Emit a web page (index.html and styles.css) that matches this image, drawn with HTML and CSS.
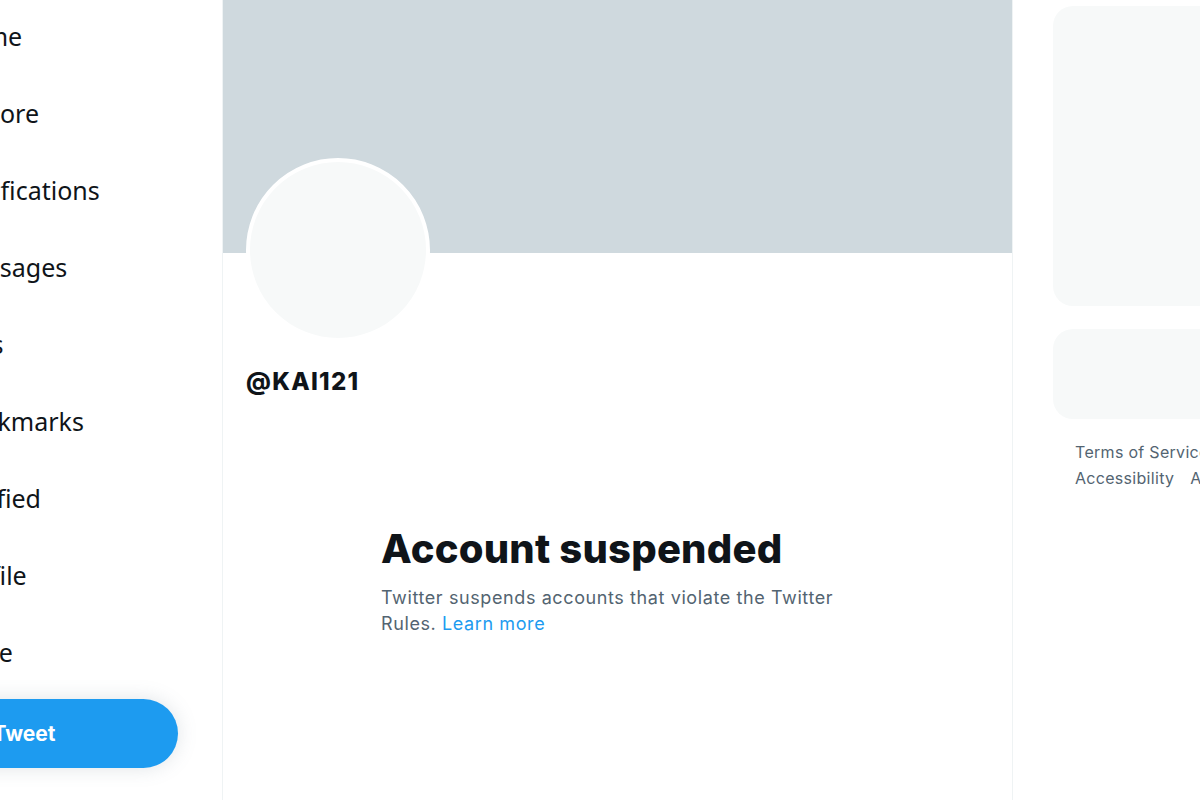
FILE: index.html
```html
<!DOCTYPE html>
<html lang="en">
<head>
<meta charset="utf-8">
<title>@KAI121 / Twitter</title>
<link rel="stylesheet" href="styles.css">
</head>
<body>
<div class="app">
  <header class="sidebar">
    <nav class="nav">
      <a class="nav-item">Home</a>
      <a class="nav-item">Explore</a>
      <a class="nav-item">Notifications</a>
      <a class="nav-item">Messages</a>
      <a class="nav-item">Lists</a>
      <a class="nav-item">Bookmarks</a>
      <a class="nav-item">Verified</a>
      <a class="nav-item">Profile</a>
      <a class="nav-item">More</a>
    </nav>
    <button class="tweet-btn">Tweet</button>
  </header>

  <main class="main">
    <div class="banner"></div>
    <div class="profile">
      <div class="avatar"></div>
      <div class="handle">@KAI121</div>
    </div>
    <div class="empty">
      <h1 class="empty-title">Account suspended</h1>
      <p class="empty-text">Twitter suspends accounts that violate the Twitter Rules. <a class="link">Learn more</a></p>
    </div>
  </main>

  <aside class="aside">
    <div class="card card-tall"></div>
    <div class="card card-short"></div>
    <div class="footer">
      <div class="footer-row"><span>Terms of Service</span><span>Privacy Policy</span><span>Cookie Policy</span></div>
      <div class="footer-row"><span>Accessibility</span><span>Ads info</span><span>More ···</span></div>
    </div>
  </aside>
</div>
</body>
</html>
```

FILE: styles.css
```css
html, body {
  margin: 0;
  padding: 0;
  background: #ffffff;
  overflow: hidden;
}
body {
  font-family: Inter, "Noto Sans", sans-serif;
  color: #0f1419;
}
.app {
  display: flex;
  width: 1200px;
  height: 800px;
  overflow: hidden;
}

/* sidebar */
.sidebar {
  width: 222px;
  flex: none;
  overflow: hidden;
  display: flex;
  flex-direction: column;
}
.nav {
  display: flex;
  flex-direction: column;
  margin-top: -2px;
  margin-left: -49px;
}
.nav-item {
  height: 76.9px;
  display: flex;
  align-items: center;
  font-family: "Noto Sans", "Open Sans", sans-serif;
  font-size: 25px;
  color: #0f1419;
  white-space: nowrap;
}
.tweet-btn {
  margin-top: 9px;
  margin-left: -130px;
  width: 308px;
  height: 69px;
  flex: none;
  border: none;
  border-radius: 35px;
  background: #1d9bf0;
  color: #ffffff;
  font-family: Inter, sans-serif;
  font-weight: 700;
  font-size: 21px;
  box-shadow: 0 0 20px rgba(101, 119, 134, 0.2);
}

/* main column */
.main {
  width: 789px;
  flex: none;
  border-left: 1px solid #eff3f4;
  border-right: 1px solid #eff3f4;
}
.banner {
  height: 253px;
  background: #cfd9de;
}
.profile {
  padding-left: 23px;
}
.avatar {
  width: 176px;
  height: 176px;
  margin-top: -95px;
  border-radius: 50%;
  background: #f7f9f9;
  border: 4px solid #ffffff;
}
.handle {
  margin-top: 26px;
  font-weight: 800;
  font-size: 24px;
  line-height: 28px;
  letter-spacing: 1.3px;
  color: #0f1419;
}
.empty {
  margin-top: 130px;
  margin-left: 158px;
  width: 480px;
}
.empty-title {
  margin: 0;
  font-size: 40px;
  line-height: 46px;
  font-weight: 800;
  letter-spacing: 0.2px;
  color: #0f1419;
}
.empty-text {
  margin: 13px 0 0;
  font-size: 18px;
  line-height: 26px;
  letter-spacing: 0.6px;
  color: #536471;
}
.link {
  color: #1d9bf0;
}

/* right column */
.aside {
  flex: none;
  width: 440px;
  padding-left: 40px;
  padding-top: 6px;
}
.card {
  background: #f7f9f9;
  border-radius: 20px;
}
.card-tall {
  height: 300px;
}
.card-short {
  height: 90px;
  margin-top: 23px;
}
.footer {
  padding: 20px 22px 0;
  font-size: 16px;
  line-height: 26px;
  letter-spacing: 0.3px;
  color: #536471;
}
.footer-row {
  display: flex;
  gap: 16px;
  white-space: nowrap;
}
```
